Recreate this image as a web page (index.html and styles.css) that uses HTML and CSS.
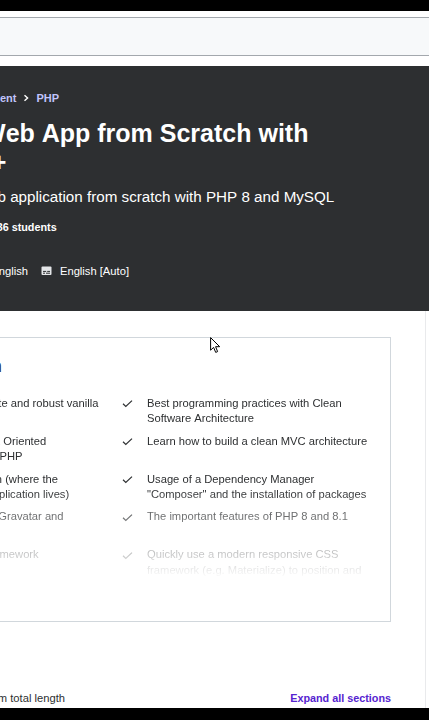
FILE: index.html
```html
<!DOCTYPE html>
<html lang="en">
<head>
<meta charset="utf-8">
<title>Build a Real Web App from Scratch with Vanilla PHP 8+</title>
<link rel="stylesheet" href="styles.css">
</head>
<body>
<div class="topbar"></div>
<div class="chrome"><div class="addr"></div></div>

<section class="hero">
  <div class="hero-col">
    <nav class="crumbs">
      <a href="#">Development</a>
      <svg class="chev" viewBox="0 0 8 8"><path d="M2.5 1.2 5.6 4 2.5 6.8"/></svg>
      <a href="#">Web Development</a>
      <svg class="chev" viewBox="0 0 8 8"><path d="M2.5 1.2 5.6 4 2.5 6.8"/></svg>
      <a href="#">PHP</a>
    </nav>
    <h1 class="title">Build a Real Web App from Scratch with Vanilla PHP 8+</h1>
    <p class="subtitle">Build a complete real web application from scratch with PHP 8 and MySQL</p>
    <div class="meta">
      <div class="rating-row">
        <span class="score">4.6</span>
        <svg class="stars" viewBox="0 0 56 10">
          <defs><polygon id="st" points="5,0.5 6.2,3.7 9.6,3.8 6.9,5.9 7.9,9.3 5,7.3 2.1,9.3 3.1,5.9 0.4,3.8 3.8,3.7"/></defs>
          <use href="#st" x="0"/><use href="#st" x="11.5"/><use href="#st" x="23"/><use href="#st" x="34.5"/><use href="#st" x="46"/>
        </svg>
        <a class="ratings" href="#">(245 ratings)</a>
        <span class="students">1,236 students</span>
      </div>
      <div class="author">Created by <a href="#">Pierre-Henry Soria</a></div>
      <div class="info-row">
        <span class="info">
          <svg class="ico" viewBox="0 0 11 11"><circle cx="5.5" cy="5.5" r="4.6" fill="none" stroke="#fff" stroke-width="1.1"/><path d="M5.5 2.8v3.4M5.5 7.4v1" stroke="#fff" stroke-width="1.2"/></svg>
          Last updated 11/2023
        </span>
        <span class="info">
          <svg class="ico" viewBox="0 0 11 11"><circle cx="5.5" cy="5.5" r="4.6" fill="none" stroke="#fff" stroke-width="1"/><ellipse cx="5.5" cy="5.5" rx="2" ry="4.6" fill="none" stroke="#fff" stroke-width="0.9"/><path d="M1 5.5h9" stroke="#fff" stroke-width="0.9"/></svg>
          English
        </span>
        <span class="info">
          <svg class="ico" viewBox="0 0 11 11"><rect x="0.5" y="1.5" width="10" height="8.5" rx="1" fill="#e4e6e8"/><path d="M2 6.4h3.2M6.2 6.4h2.8M2 8.2h2M5 8.2h4" stroke="#2d2f31" stroke-width="1"/></svg>
          English [Auto]
        </span>
      </div>
    </div>
  </div>
</section>

<div class="below">
  <main class="main">
    <section class="learn">
      <h2 class="learn-title">What you'll learn</h2>
      <div class="learn-clip">
        <ul class="learn-list">
          <li><svg class="check" viewBox="0 0 11 11"><path d="M1 5.8 3.8 8.4 10 2.6"/></svg><span>Learn to build a complete and robust vanilla PHP web app</span></li>
          <li><svg class="check" viewBox="0 0 11 11"><path d="M1 5.8 3.8 8.4 10 2.6"/></svg><span>Best programming practices with Clean Software Architecture</span></li>
          <li><svg class="check" viewBox="0 0 11 11"><path d="M1 5.8 3.8 8.4 10 2.6"/></svg><span>Fully understand Object Oriented Programming (OOP) in PHP</span></li>
          <li><svg class="check" viewBox="0 0 11 11"><path d="M1 5.8 3.8 8.4 10 2.6"/></svg><span>Learn how to build a clean MVC architecture</span></li>
          <li><svg class="check" viewBox="0 0 11 11"><path d="M1 5.8 3.8 8.4 10 2.6"/></svg><span>Learn about the Domain (where the business logic of the application lives)</span></li>
          <li><svg class="check" viewBox="0 0 11 11"><path d="M1 5.8 3.8 8.4 10 2.6"/></svg><span>Usage of a Dependency Manager "Composer" and the installation of packages</span></li>
          <li><svg class="check" viewBox="0 0 11 11"><path d="M1 5.8 3.8 8.4 10 2.6"/></svg><span>Use external APIs (like Gravatar and reCAPTCHA)</span></li>
          <li><svg class="check" viewBox="0 0 11 11"><path d="M1 5.8 3.8 8.4 10 2.6"/></svg><span>The important features of PHP 8 and 8.1</span></li>
          <li><svg class="check" viewBox="0 0 11 11"><path d="M1 5.8 3.8 8.4 10 2.6"/></svg><span>Build your own MVC framework</span></li>
          <li><svg class="check" viewBox="0 0 11 11"><path d="M1 5.8 3.8 8.4 10 2.6"/></svg><span>Quickly use a modern responsive CSS framework (e.g. Materialize) to position and style elements</span></li>
        </ul>
      </div>
    </section>
    <section class="course">
      <h2 class="course-title">Course content</h2>
      <div class="course-bar">
        <span>12 sections • 104 lectures • 9h 30m total length</span>
        <a class="expand" href="#">Expand all sections</a>
      </div>
    </section>
  </main>
  <div class="rail"></div>
</div>
<div class="bottombar"></div>

<svg class="cursor" viewBox="0 0 11 17"><path d="M0.6 0.6V13.2L3.6 10.4 5.7 15.4 7.6 14.6 5.6 9.7H9.7Z"/></svg>
</body>
</html>
```

FILE: styles.css
```css
* { box-sizing: border-box; }
html, body { margin: 0; padding: 0; }
html { overflow: hidden; }
body {
  width: 429px;
  height: 720px;
  overflow: hidden;
  position: relative;
  background: #fff;
  color: #2d2f31;
  font-family: "Liberation Sans", Arial, sans-serif;
  font-kerning: none;
}
a { text-decoration: none; }

.topbar { height: 11px; background: #000; }
.chrome { padding: 6px 0 10px; background: #fff; }
.addr {
  height: 39px;
  background: #f7f9fa;
  border-top: 1px solid #a3a8ad;
  border-bottom: 1px solid #a3a8ad;
}

/* hero */
.hero { background: #2d2f31; color: #fff; }
.hero-col {
  margin-left: -168px;
  width: 520px;
  padding: 24px 0 32px;
}
.crumbs {
  display: flex;
  align-items: center;
  height: 16px;
  font-size: 11px;
  line-height: 16px;
  font-weight: 700;
  white-space: nowrap;
}
.crumbs a { color: #c0c4fc; }
.chev {
  flex: none;
  width: 8px;
  height: 8px;
  margin: 0 6px;
  fill: none;
  stroke: #fff;
  stroke-width: 1.4;
}
.title {
  margin: 12.5px 0 0;
  font-size: 25px;
  line-height: 29px;
  font-weight: 700;
}
.subtitle {
  margin: 10px 0 0;
  font-size: 15.2px;
  line-height: 20px;
  white-space: nowrap;
}
.meta {
  margin-top: 12.3px;
  display: flex;
  flex-direction: column;
  gap: 6px;
  font-size: 11.2px;
  line-height: 16px;
  white-space: nowrap;
}
.rating-row {
  display: flex;
  align-items: center;
  height: 16px;
  font-size: 10.8px;
  font-weight: 700;
}
.score { color: #f3ca8c; }
.stars { width: 56px; height: 10px; margin: 0 4px; fill: #f3ca8c; }
.ratings { color: #c0c4fc; font-weight: 400; text-decoration: underline; margin-right: 10px; }
.students { color: #fff; }
.author a { color: #c0c4fc; text-decoration: underline; }
.info-row { display: flex; gap: 13px; }
.info { display: flex; align-items: center; }
.ico { flex: none; width: 11px; height: 11px; margin-right: 8px; }

/* below */
.below { display: flex; }
.main {
  flex: none;
  width: 559px;
  margin-left: -168px;
  padding: 26px 0 1.7px;
}
.rail {
  margin-left: auto;
  width: 4px;
  border-left: 1px solid #e9eaec;
}

.learn {
  width: 559px;
  border: 1px solid #d1d7dc;
  padding: 16.6px 21px 42.7px 24px;
}
.learn-title {
  margin: 0;
  font-size: 18.2px;
  line-height: 24px;
  font-weight: 700;
  white-space: nowrap;
}
.learn-clip {
  margin-top: 17.4px;
  max-height: 182.8px;
  overflow: hidden;
  -webkit-mask-image: linear-gradient(to bottom, #000 50%, transparent 100%);
  mask-image: linear-gradient(to bottom, #000 50%, transparent 100%);
}
.learn-list {
  list-style: none;
  margin: 0;
  padding: 0;
  display: grid;
  grid-template-columns: 247px 247px;
  column-gap: 18px;
  row-gap: 6.7px;
  font-size: 11.2px;
  line-height: 15.6px;
  color: #2d2f31;
}
.learn-list li { display: flex; align-items: flex-start; }
.learn-list span { width: 222px; }
.check {
  flex: none;
  width: 11px;
  height: 11px;
  margin: 2.3px 14px 0 0;
  fill: none;
  stroke: #2d2f31;
  stroke-width: 1.2;
}

.course { margin-top: 26px; }
.course-title {
  margin: 0;
  font-size: 18.5px;
  line-height: 24px;
  font-weight: 700;
  white-space: nowrap;
}
.course-bar {
  margin-top: 18px;
  display: flex;
  justify-content: space-between;
  align-items: baseline;
  font-size: 11.2px;
  line-height: 16px;
  white-space: nowrap;
}
.expand { font-size: 10.8px; font-weight: 700; color: #5624d0; }

.bottombar { height: 20px; background: #000; }

.cursor {
  position: absolute;
  left: 210px;
  top: 336.5px;
  width: 11px;
  height: 17px;
  fill: #fff;
  stroke: #000;
  stroke-width: 1;
  stroke-linejoin: round;
}
```
